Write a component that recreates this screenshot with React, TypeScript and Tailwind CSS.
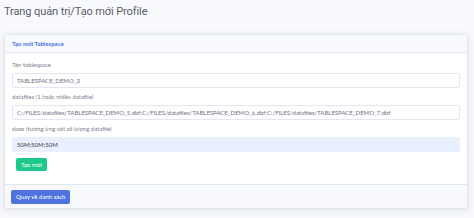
export default function App() {
  const fields = [
    { label: "Tên tablespace", value: "TABLESPACE_DEMO_3", filled: false },
    {
      label: "datafiles (1 hoặc nhiều datafile)",
      value:
        "C:/FILES/datafiles/TABLESPACE_DEMO_5.dbf;C:/FILES/datafiles/TABLESPACE_DEMO_6.dbf;C:/FILES/datafiles/TABLESPACE_DEMO_7.dbf",
      filled: false,
    },
    { label: "sizes (tương ứng với số lượng datafile)", value: "50M;50M;50M", filled: true },
  ];

  return (
    <div className="h-[218px] w-[474px] overflow-hidden bg-[#f8f9fc] font-['Lato',sans-serif] text-[#858796]">
      <div className="pl-[4px] pr-[6px] pt-[2px]">
        <h1 className="h-[32px] font-['Roboto',sans-serif] text-[11px] leading-[20px] tracking-[-0.1px] text-[#5a5c69]">
          Trang quản trị/Tạo mới Profile
        </h1>

        <div className="rounded-[3px] border border-[#e3e6f0] bg-white shadow-[0_1px_6px_rgba(58,59,69,0.12)]">
          <div className="flex h-[18px] items-center border-b border-[#e3e6f0] bg-[#f8f9fc] px-[7px]">
            <span className="text-[6px] leading-[8px] font-bold text-[#4e73df]">Tạo mới Tablespace</span>
          </div>

          <div className="flex flex-col items-start px-[7px] pb-[13px] pt-[8px]">
            {fields.map((f) => (
              <div key={f.label} className="mb-[5px] w-full">
                <label className="block text-[6px] leading-[8px] text-[#7d7f8e]">{f.label}</label>
                <div
                  className={`mt-[4px] flex h-[15px] items-center rounded-[2px] border px-[4px] text-[6px] leading-[8px] ${
                    f.filled ? "border-[#e8f0fe] bg-[#e8f0fe] text-[#3a3b45]" : "border-[#e3e6f0] bg-white text-[#6e707e]"
                  }`}
                >
                  <span className="whitespace-nowrap">{f.value}</span>
                </div>
              </div>
            ))}
            <button className="ml-[4px] mt-[1px] flex h-[13px] items-center rounded-[2px] bg-[#1cc88a] px-[5px] text-[6px] leading-[8px] text-white">
              Tạo mới
            </button>
          </div>

          <div className="flex border-t border-[#e3e6f0] bg-[#f8f9fc] px-[6px] pb-[4px] pt-[5px]">
            <button className="flex h-[14px] items-center rounded-[2px] bg-[#4e73df] px-[5px] text-[6px] leading-[8px] text-white">
              Quay về danh sách
            </button>
          </div>
        </div>
      </div>
    </div>
  );
}
